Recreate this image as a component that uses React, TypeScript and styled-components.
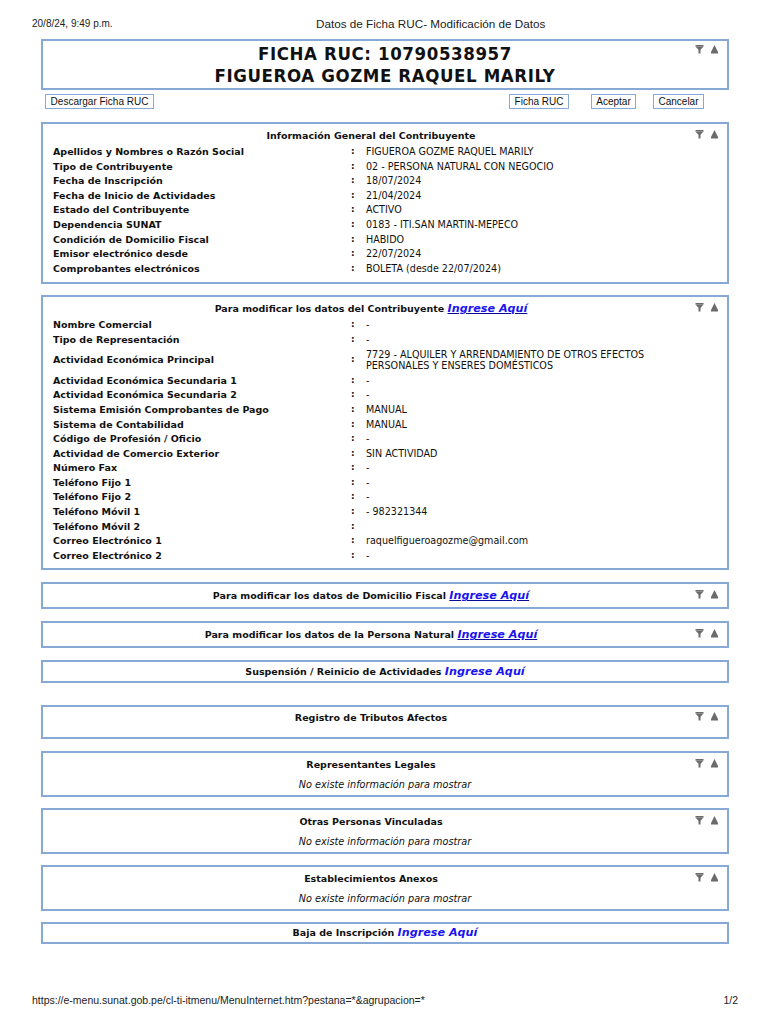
import React from "react";
import styled, { createGlobalStyle } from "styled-components";

const Global = createGlobalStyle`
  html, body { margin: 0; padding: 0; background: #fff; }
  body { font-family: "DejaVu Sans", Verdana, sans-serif; color: #111; }
`;

const Page = styled.div`
  width: 768px;
  height: 1024px;
  box-sizing: border-box;
  display: flex;
  flex-direction: column;
  padding: 17px 30px 0 32px;
`;

const PrintBar = styled.div`
  display: flex;
  align-items: center;
  font-family: "Liberation Sans", Arial, sans-serif;
  color: #222;
  height: 12px;
`;

const PrintDate = styled.span`
  font-size: 10px;
  width: 284px;
`;

const PrintTitle = styled.span`
  font-size: 11.7px;
`;

const Content = styled.div`
  margin: 10px 0 0 9px;
  width: 688px;
  display: flex;
  flex-direction: column;
`;

const Panel = styled.section<{ $gap?: number; $pt?: number; $pb?: number }>`
  position: relative;
  border: 2px solid #86a9d6;
  box-sizing: border-box;
  margin-top: ${(p) => p.$gap ?? 11}px;
  padding: ${(p) => p.$pt ?? 5}px 10px ${(p) => p.$pb ?? 6}px 10px;
`;

const HeaderPanel = styled.section`
  position: relative;
  border: 2px solid #86a9d6;
  box-sizing: border-box;
  height: 51px;
  display: flex;
  flex-direction: column;
  align-items: center;
  justify-content: center;
  font-family: "DejaVu Sans Condensed", "DejaVu Sans", sans-serif;
  font-stretch: condensed;
  font-weight: bold;
  font-size: 18.5px;
  letter-spacing: 0.6px;
  line-height: 21.5px;
`;

const Toggles = styled.div<{ $top?: number }>`
  position: absolute;
  right: 8px;
  top: ${(p) => p.$top ?? 6}px;
  display: flex;
  gap: 6px;
`;

const ButtonRow = styled.div`
  display: flex;
  align-items: center;
  margin-top: 4px;
  padding: 0 25px 0 4px;
`;

const Btn = styled.span<{ $w: number; $ml?: number; $push?: boolean }>`
  display: inline-block;
  box-sizing: border-box;
  width: ${(p) => p.$w}px;
  text-align: center;
  border: 1.5px solid #86a9d6;
  font-family: "Liberation Sans", Arial, sans-serif;
  font-size: 10px;
  line-height: 11px;
  padding: 1px 0;
  margin-left: ${(p) => (p.$push ? "auto" : `${p.$ml ?? 0}px`)};
  color: #111;
`;

const Title = styled.div<{ $icons?: boolean; $mb?: number }>`
  text-align: center;
  font-weight: bold;
  font-size: 9.5px;
  line-height: 14px;
  height: 14px;
  margin-bottom: ${(p) => p.$mb ?? 3}px;
  padding-right: ${(p) => (p.$icons ? 28 : 0)}px;
`;

const Link = styled.a<{ $u?: boolean }>`
  color: #1a14f0;
  font-style: italic;
  font-weight: bold;
  font-size: 11.2px;
  line-height: 10px;
  text-decoration: ${(p) => (p.$u ? "underline" : "none")};
  text-decoration-color: #0a0a9a;
  cursor: pointer;
`;

const Rows = styled.div`
  display: grid;
  grid-template-columns: 298px 15px 1fr;
  row-gap: 3px;
  align-items: center;
`;

const Label = styled.div`
  font-weight: bold;
  font-size: 9.5px;
  line-height: 11.6px;
`;

const Colon = styled.div`
  font-weight: bold;
  font-size: 9px;
  line-height: 11.6px;
`;

const Value = styled.div<{ $wrap?: boolean }>`
  font-size: 9.6px;
  line-height: 11.6px;
  max-width: ${(p) => (p.$wrap ? "300px" : "none")};
`;

const Empty = styled.div`
  text-align: center;
  font-style: italic;
  font-size: 9.7px;
  line-height: 12px;
  margin-top: 7px;
`;

const Arrow = ({ up }: { up?: boolean }) => (
  <svg width="9" height="10" viewBox="0 0 9 10">
    {up ? (
      <>
        <polygon points="4.5,1 8,8 1,8" fill="#6b6b6b" />
        <rect x="1" y="8" width="7" height="1.5" fill="#6b6b6b" />
      </>
    ) : (
      <>
        <rect x="0.5" y="1" width="8" height="1.5" fill="#6b6b6b" />
        <polygon points="0.5,2.5 8.5,2.5 4.5,7" fill="#6b6b6b" />
        <rect x="3.5" y="6" width="2" height="3.5" fill="#6b6b6b" />
      </>
    )}
  </svg>
);

const ToggleIcons = ({ top }: { top?: number }) => (
  <Toggles $top={top}>
    <Arrow />
    <Arrow up />
  </Toggles>
);

const Footer = styled.div`
  margin-top: auto;
  height: 30px;
  display: flex;
  justify-content: space-between;
  font-family: "Liberation Sans", Arial, sans-serif;
  font-size: 10.5px;
  color: #222;
`;

type Row = [string, string];

const general: Row[] = [
  ["Apellidos y Nombres o Razón Social", "FIGUEROA GOZME RAQUEL MARILY"],
  ["Tipo de Contribuyente", "02 - PERSONA NATURAL CON NEGOCIO"],
  ["Fecha de Inscripción", "18/07/2024"],
  ["Fecha de Inicio de Actividades", "21/04/2024"],
  ["Estado del Contribuyente", "ACTIVO"],
  ["Dependencia SUNAT", "0183 - ITI.SAN MARTIN-MEPECO"],
  ["Condición de Domicilio Fiscal", "HABIDO"],
  ["Emisor electrónico desde", "22/07/2024"],
  ["Comprobantes electrónicos", "BOLETA (desde 22/07/2024)"],
];

const contrib: Row[] = [
  ["Nombre Comercial", "-"],
  ["Tipo de Representación", "-"],
  [
    "Actividad Económica Principal",
    "7729 - ALQUILER Y ARRENDAMIENTO DE OTROS EFECTOS PERSONALES Y ENSERES DOMÉSTICOS",
  ],
  ["Actividad Económica Secundaria 1", "-"],
  ["Actividad Económica Secundaria 2", "-"],
  ["Sistema Emisión Comprobantes de Pago", "MANUAL"],
  ["Sistema de Contabilidad", "MANUAL"],
  ["Código de Profesión / Oficio", "-"],
  ["Actividad de Comercio Exterior", "SIN ACTIVIDAD"],
  ["Número Fax", "-"],
  ["Teléfono Fijo 1", "-"],
  ["Teléfono Fijo 2", "-"],
  ["Teléfono Móvil 1", "- 982321344"],
  ["Teléfono Móvil 2", ""],
  ["Correo Electrónico 1", "raquelfigueroagozme@gmail.com"],
  ["Correo Electrónico 2", "-"],
];

const DataRows = ({ rows }: { rows: Row[] }) => (
  <Rows>
    {rows.map(([l, v]) => (
      <React.Fragment key={l}>
        <Label>{l}</Label>
        <Colon>:</Colon>
        <Value $wrap={v.length > 60}>{v}</Value>
      </React.Fragment>
    ))}
  </Rows>
);

const EMPTY = "No existe información para mostrar";

export default function App() {
  return (
    <Page>
      <Global />
      <PrintBar>
        <PrintDate>20/8/24, 9:49 p.m.</PrintDate>
        <PrintTitle>Datos de Ficha RUC- Modificación de Datos</PrintTitle>
      </PrintBar>
      <Content>
        <HeaderPanel>
          <ToggleIcons top={3} />
          <div>FICHA RUC: 10790538957</div>
          <div>FIGUEROA GOZME RAQUEL MARILY</div>
        </HeaderPanel>
        <ButtonRow>
          <Btn $w={109}>Descargar Ficha RUC</Btn>
          <Btn $w={60} $push>Ficha RUC</Btn>
          <Btn $w={45} $ml={22}>Aceptar</Btn>
          <Btn $w={51} $ml={17}>Cancelar</Btn>
        </ButtonRow>

        <Panel $gap={13} $pb={8}>
          <ToggleIcons top={5} />
          <Title $icons>Información General del Contribuyente</Title>
          <DataRows rows={general} />
        </Panel>

        <Panel $pb={7}>
          <ToggleIcons top={5} />
          <Title $icons>
            Para modificar los datos del Contribuyente <Link $u>Ingrese Aquí</Link>
          </Title>
          <DataRows rows={contrib} />
        </Panel>

        <Panel $gap={12} $pb={1}>
          <ToggleIcons top={5} />
          <Title $icons>
            Para modificar los datos de Domicilio Fiscal <Link $u>Ingrese Aquí</Link>
          </Title>
        </Panel>

        <Panel $gap={12} $pb={1}>
          <ToggleIcons top={5} />
          <Title $icons>
            Para modificar los datos de la Persona Natural <Link $u>Ingrese Aquí</Link>
          </Title>
        </Panel>

        <Panel $gap={12} $pt={3} $pb={2}>
          <Title $mb={0}>
            Suspensión / Reinicio de Actividades <Link>Ingrese Aquí</Link>
          </Title>
        </Panel>

        <Panel $gap={22} $pt={4} $pb={9}>
          <ToggleIcons top={4} />
          <Title $icons>Registro de Tributos Afectos</Title>
        </Panel>

        <Panel $gap={12} $pb={4}>
          <ToggleIcons top={5} />
          <Title $icons $mb={0}>Representantes Legales</Title>
          <Empty>{EMPTY}</Empty>
        </Panel>

        <Panel $gap={11} $pb={4}>
          <ToggleIcons top={5} />
          <Title $icons $mb={0}>Otras Personas Vinculadas</Title>
          <Empty>{EMPTY}</Empty>
        </Panel>

        <Panel $gap={11} $pb={4}>
          <ToggleIcons top={5} />
          <Title $icons $mb={0}>Establecimientos Anexos</Title>
          <Empty>{EMPTY}</Empty>
        </Panel>

        <Panel $gap={11} $pt={2} $pb={2}>
          <Title $mb={0}>
            Baja de Inscripción <Link>Ingrese Aquí</Link>
          </Title>
        </Panel>
      </Content>
      <Footer>
        <span>https://e-menu.sunat.gob.pe/cl-ti-itmenu/MenuInternet.htm?pestana=*&amp;agrupacion=*</span>
        <span>1/2</span>
      </Footer>
    </Page>
  );
}
